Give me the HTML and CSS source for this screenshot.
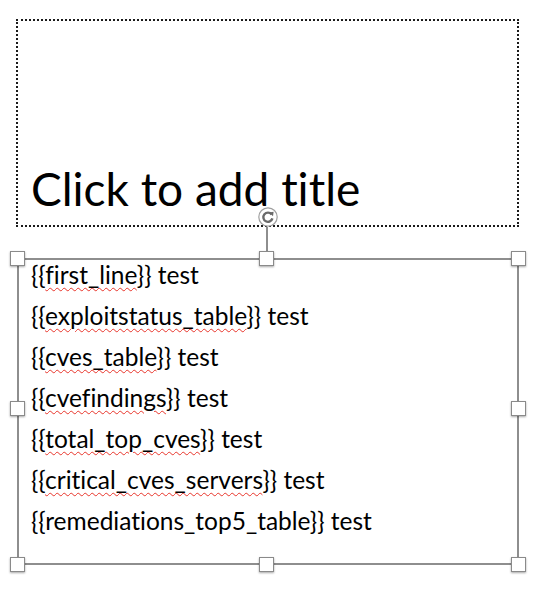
FILE: index.html
```html
<!DOCTYPE html>
<html>
<head>
<meta charset="utf-8">
<link rel="stylesheet" href="styles.css">
</head>
<body>
<div class="slide">
  <div class="title-box">
    <div class="title-text">Click to add title</div>
  </div>
  <div class="body-box">
    <div class="rotate-line"></div>
    <div class="rotate-handle">
      <svg width="20" height="20" viewBox="0 0 20 20">
        <circle cx="10" cy="10" r="9.2" fill="#fff" stroke="#a0a0a0" stroke-width="1.2"/>
        <path d="M13.6 7.4 A4.6 4.6 0 1 0 14.4 11.4" fill="none" stroke="#6a6a6a" stroke-width="2.4"/>
        <path d="M11 5.4 L15.6 4.7 L15 9.3 Z" fill="#6a6a6a"/>
      </svg>
    </div>
    <span class="handle h-tl"></span>
    <span class="handle h-tc"></span>
    <span class="handle h-tr"></span>
    <span class="handle h-ml"></span>
    <span class="handle h-mr"></span>
    <span class="handle h-bl"></span>
    <span class="handle h-bc"></span>
    <span class="handle h-br"></span>
    <div class="lines">
      <p class="line">{{<span class="sp">first_line</span>}} test</p>
      <p class="line">{{<span class="sp">exploitstatus_table</span>}} test</p>
      <p class="line">{{<span class="sp">cves_table</span>}} test</p>
      <p class="line">{{<span class="sp">cvefindings</span>}} test</p>
      <p class="line">{{<span class="sp">total_top_cves</span>}} test</p>
      <p class="line">{{<span class="sp">critical_cves_servers</span>}} test</p>
      <p class="line">{{remediations_top5_table}} test</p>
    </div>
  </div>
</div>
</body>
</html>
```

FILE: styles.css
```css
html, body {
  margin: 0;
  padding: 0;
  background: #ffffff;
}
.slide {
  width: 558px;
  height: 610px;
  padding-top: 19px;
  box-sizing: border-box;
  font-family: Lato, "Open Sans", sans-serif;
  font-variant-ligatures: none;
  color: #000;
}
.title-box {
  margin-left: 16px;
  width: 503px;
  height: 208px;
  box-sizing: border-box;
  border: 2px dotted #1a1a1a;
  display: flex;
  align-items: flex-end;
  padding: 0 0 13px 13px;
}
.title-text {
  font-size: 46px;
  line-height: 1;
  font-weight: 400;
}
.body-box {
  position: relative;
  margin-top: 31px;
  margin-left: 17px;
  width: 502px;
  height: 307px;
  box-sizing: border-box;
  border: 2px solid #8e8e8e;
  padding: 0 0 0 12px;
}
.rotate-line {
  position: absolute;
  left: 247px;
  top: -33px;
  width: 2px;
  height: 33px;
  background: #8e8e8e;
}
.rotate-handle {
  position: absolute;
  left: 239px;
  top: -53px;
  width: 20px;
  height: 20px;
}
.rotate-handle svg { display: block; }
.handle {
  position: absolute;
  width: 15px;
  height: 15px;
  box-sizing: border-box;
  background: #fff;
  border: 1px solid #8a8a8a;
  box-shadow: 0 1px 2px rgba(0,0,0,0.35);
}
.h-tl { left: -9px; top: -9px; }
.h-tc { left: 240px; top: -9px; }
.h-tr { right: -9px; top: -9px; }
.h-ml { left: -9px; top: 141px; }
.h-mr { right: -9px; top: 141px; }
.h-bl { left: -9px; bottom: -9px; }
.h-bc { left: 240px; bottom: -9px; }
.h-br { right: -9px; bottom: -9px; }
.lines {
  display: flex;
  flex-direction: column;
  margin-top: -6px;
}
.line {
  margin: 0;
  font-size: 24.5px;
  line-height: 41px;
  height: 41px;
  white-space: nowrap;
}
.sp {
  text-decoration: underline wavy #e8352b;
  text-decoration-thickness: 1.3px;
  text-underline-offset: 3px;
}
```
